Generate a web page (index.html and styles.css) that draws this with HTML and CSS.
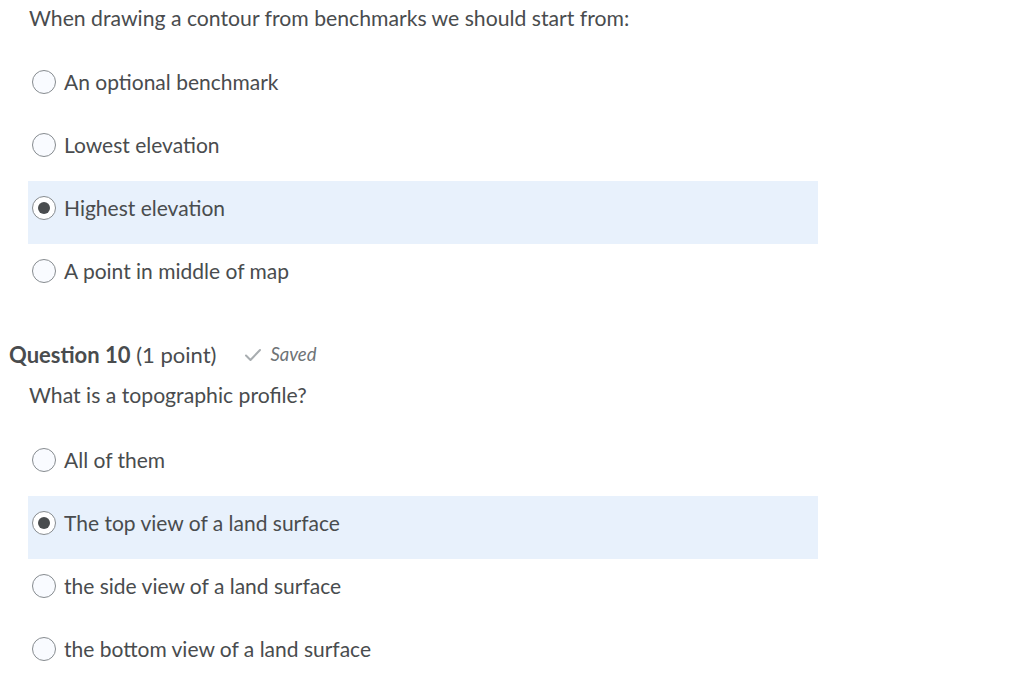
FILE: index.html
```html
<!DOCTYPE html>
<html>
<head>
<meta charset="utf-8">
<link rel="stylesheet" href="styles.css">
</head>
<body>
<div class="page">
  <section class="question">
    <p class="prompt">When drawing a contour from benchmarks we should start from:</p>
    <ul class="options">
      <li class="option"><span class="radio"></span><span class="label">An optional benchmark</span></li>
      <li class="option"><span class="radio"></span><span class="label">Lowest elevation</span></li>
      <li class="option selected"><span class="radio checked"></span><span class="label">Highest elevation</span></li>
      <li class="option"><span class="radio"></span><span class="label">A point in middle of map</span></li>
    </ul>
  </section>
  <section class="question">
    <div class="q-header">
      <h2 class="q-title"><strong>Question 10</strong> (1 point)</h2>
      <span class="saved"><svg class="check" width="18" height="14" viewBox="0 0 18 14"><path d="M2 7.5 L6.5 12 L16 2" fill="none" stroke="#a8adb0" stroke-width="2" stroke-linecap="round" stroke-linejoin="round"/></svg><em>Saved</em></span>
    </div>
    <p class="prompt prompt2">What is a topographic profile?</p>
    <ul class="options options2">
      <li class="option"><span class="radio"></span><span class="label">All of them</span></li>
      <li class="option selected"><span class="radio checked"></span><span class="label">The top view of a land surface</span></li>
      <li class="option"><span class="radio"></span><span class="label">the side view of a land surface</span></li>
      <li class="option"><span class="radio"></span><span class="label">the bottom view of a land surface</span></li>
    </ul>
  </section>
</div>
</body>
</html>
```

FILE: styles.css
```css
* { box-sizing: border-box; }
html, body { margin: 0; padding: 0; background: #ffffff; }
body {
  font-family: Lato, "Open Sans", sans-serif;
  color: #494c4e;
  font-size: 21px;
  line-height: 1.4;
}
.page { padding-top: 4px; }
.prompt {
  margin: 0;
  padding-left: 29px;
  height: 28px;
  line-height: 28px;
  font-size: 21.2px;
}
.options {
  list-style: none;
  margin: 23px 0 0 28px;
  padding: 0;
  width: 790px;
}
.option {
  display: flex;
  align-items: center;
  height: 63px;
  padding: 0 0 9px 4px;
}
.option.selected { background: #e8f1fc; }
.radio {
  width: 24px;
  height: 24px;
  border-radius: 50%;
  border: 1px solid #868b8f;
  background: #f9fbff;
  flex: none;
  display: flex;
  align-items: center;
  justify-content: center;
}
.radio.checked { background: #ffffff; }
.radio.checked::after {
  content: "";
  width: 12px;
  height: 12px;
  border-radius: 50%;
  background: #494c4e;
}
.label { margin-left: 8px; }
.q-header {
  display: flex;
  align-items: center;
  margin-top: 34px;
  padding-left: 9px;
  height: 28px;
}
.q-title {
  margin: 0;
  font-size: 22px;
  font-weight: 400;
}
.q-title strong { font-weight: 700; }
.saved {
  display: flex;
  align-items: center;
  margin-left: 28px;
  color: #6e7376;
  font-size: 18.5px;
}
.check { margin-right: 8px; }
.prompt2 { margin-top: 12px; }
.options2 { margin-top: 24px; }
```
